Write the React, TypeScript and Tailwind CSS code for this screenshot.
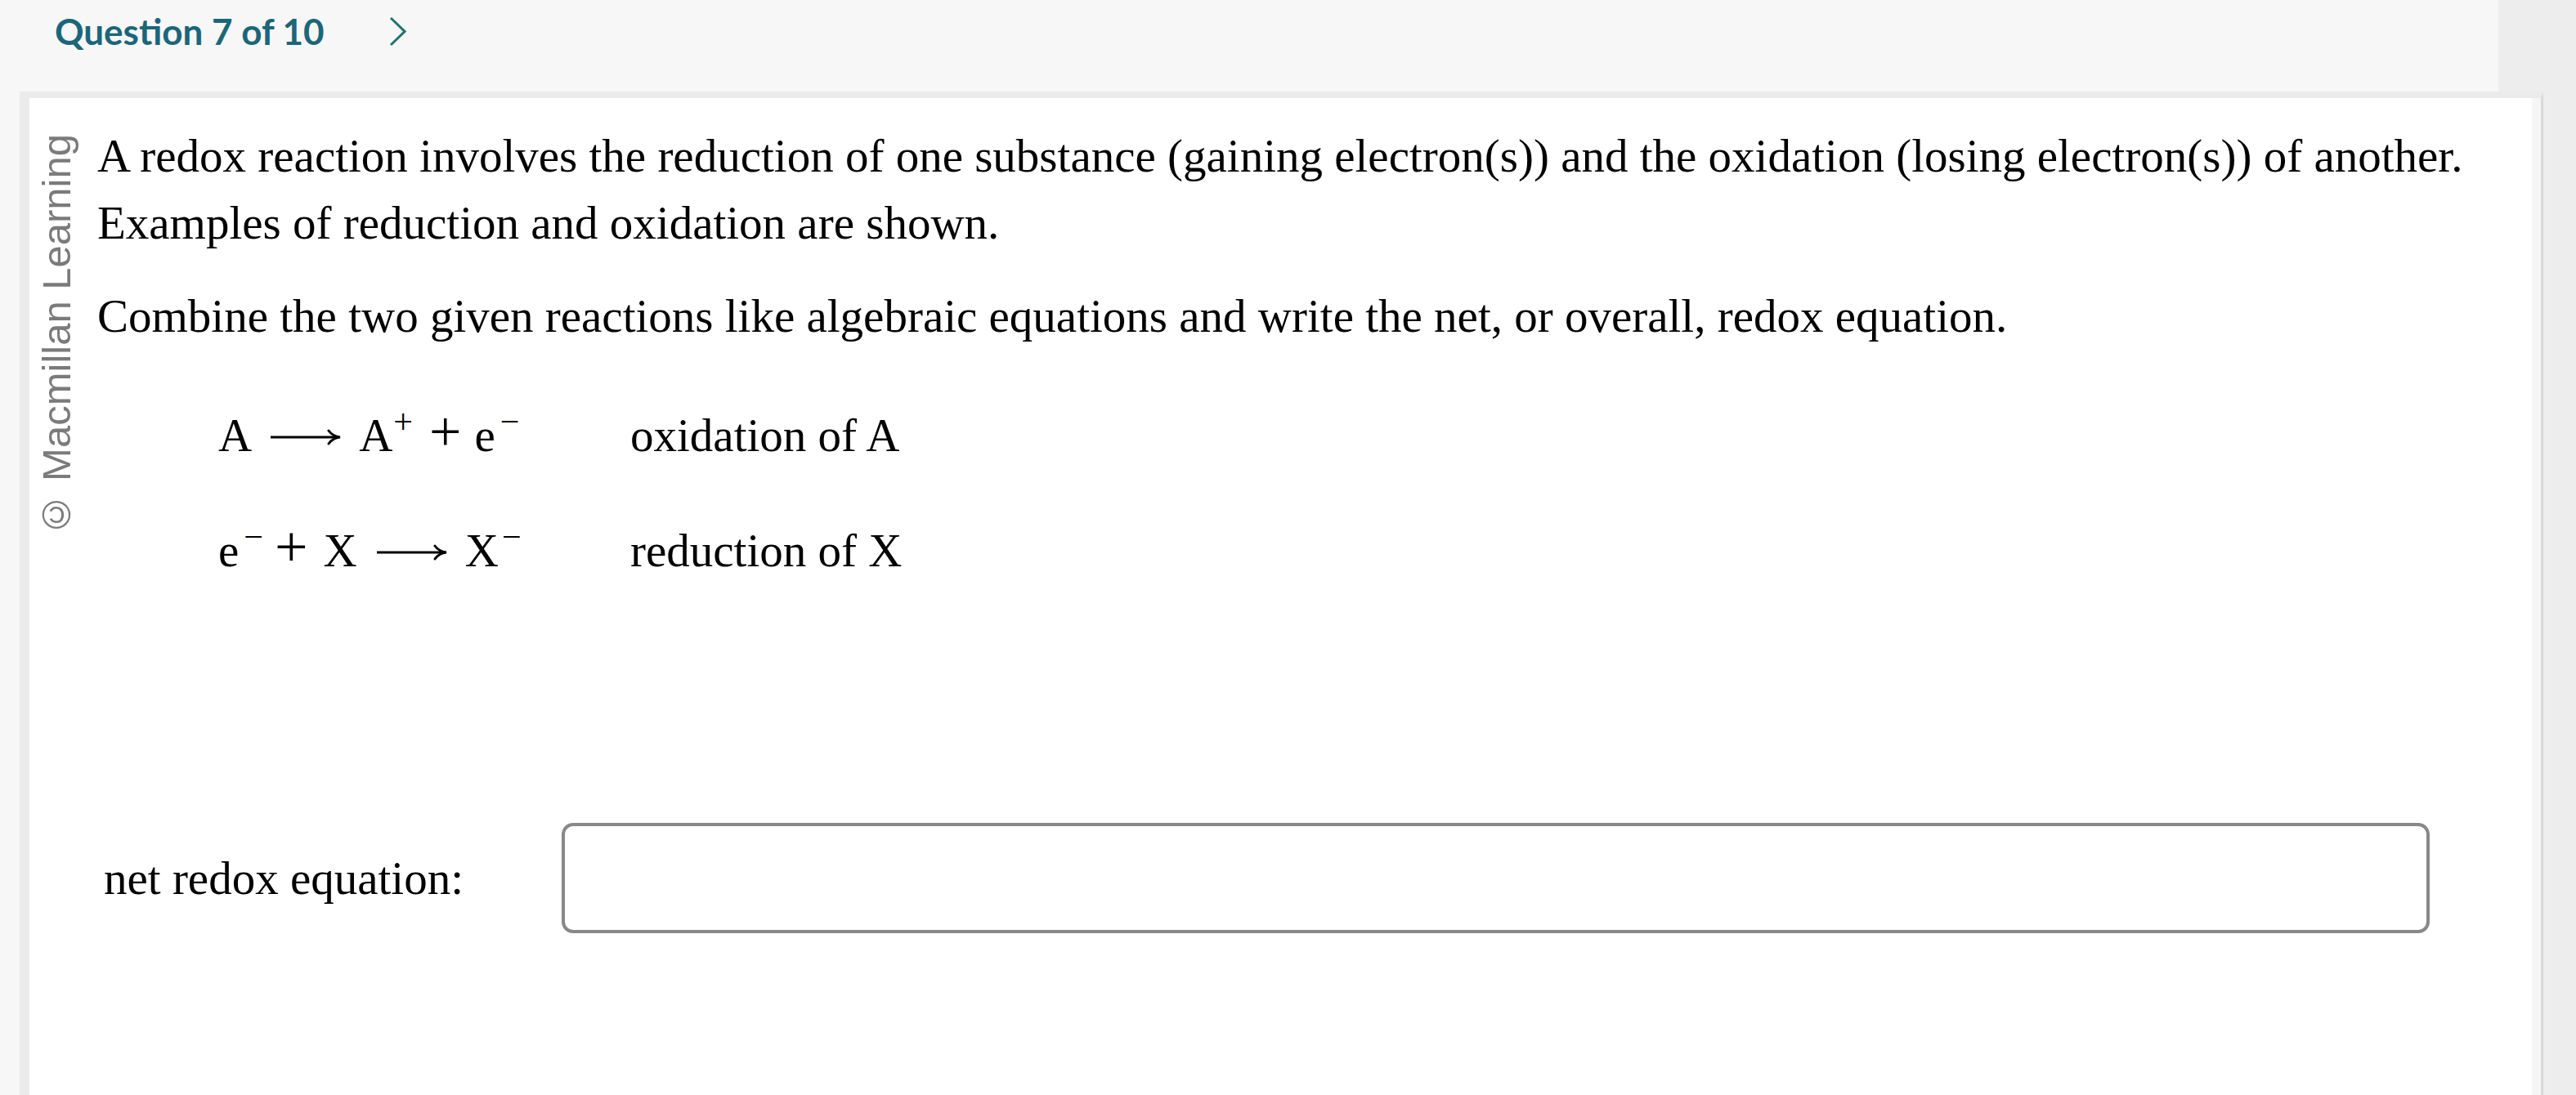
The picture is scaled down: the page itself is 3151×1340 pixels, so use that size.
function Arrow() {
  return (
    <svg className="inline-block h-[20px] w-[86px] align-[7px]" viewBox="0 0 86 20">
      <path d="M0 10 H82" stroke="#000" strokeWidth="3.2" fill="none" />
      <path d="M71 2 Q76 9 85 10 Q76 11 71 18" stroke="#000" strokeWidth="3" fill="none" strokeLinecap="round" />
    </svg>
  );
}

function Sup({ children, className = '' }: { children: string; className?: string }) {
  return <span className={`text-[42px] leading-none align-[22px] ${className}`}>{children}</span>;
}

export default function App() {
  return (
    <div className="flex h-[1340px] w-full overflow-hidden bg-[#ededed]">
      <div className="flex w-[3111px] shrink-0 flex-col">
        <header className="flex h-[112px] w-[3056px] shrink-0 items-start bg-[#f7f7f7] pl-[67px] pt-[16px]">
          <h1 className="font-['Lato',sans-serif] text-[44px] font-bold leading-[44px] text-[#1b6679]">
            Question 7 of 10
          </h1>
          <svg className="ml-[78px] mt-[4px] h-[37px] w-[22px]" viewBox="0 0 22 37">
            <path d="M3 2 L20 18.5 L3 35" fill="none" stroke="#1e7470" strokeWidth="3" />
          </svg>
        </header>

        <div className="flex flex-1 bg-[#f7f7f7] pl-[24px]">
          <div className="flex flex-1 border-l-[12px] border-r-[3px] border-t-[8px] border-[#ebebeb] border-r-[#d9d9d9]">
            <div className="flex flex-1 border-r-[11px] border-[#f6f6f6] bg-white">
              <div className="pl-[9px] pt-[44px]">
                <div className="rotate-180 font-['Liberation_Sans',Arial,sans-serif] text-[49px] leading-[49px] text-[#7b7b7b] [writing-mode:vertical-rl]">
                  © Macmillan Learning
                </div>
              </div>

              <div className="ml-[25px] pt-[30px] font-['Liberation_Serif','Times_New_Roman',serif] text-[57px] leading-[82px] text-black">
                <p className="whitespace-nowrap">
                  A redox reaction involves the reduction of one substance (gaining electron(s)) and the oxidation
                  (losing electron(s)) of another.
                  <br />
                  Examples of reduction and oxidation are shown.
                </p>
                <p className="mt-[32px] whitespace-nowrap">
                  Combine the two given reactions like algebraic equations and write the net, or overall, redox
                  equation.
                </p>

                <div className="ml-[148px] mt-[34px] leading-[141px]">
                  <div className="grid grid-cols-[504px_auto]">
                    <div className="whitespace-nowrap">
                      <span>A</span>
                      <span className="ml-[23px]">
                        <Arrow />
                      </span>
                      <span className="ml-[22px]">A</span>
                      <Sup className="ml-[1px]">+</Sup>
                      <span className="ml-[20px] text-[70px] leading-none">+</span>
                      <span className="ml-[16px]">e</span>
                      <Sup className="ml-[6px]">−</Sup>
                    </div>
                    <div className="whitespace-nowrap">oxidation of A</div>
                  </div>
                  <div className="grid grid-cols-[504px_auto]">
                    <div className="whitespace-nowrap">
                      <span>e</span>
                      <Sup className="ml-[6px]">−</Sup>
                      <span className="ml-[14px] text-[72px] leading-none">+</span>
                      <span className="ml-[19px]">X</span>
                      <span className="ml-[24px]">
                        <Arrow />
                      </span>
                      <span className="ml-[22px]">X</span>
                      <Sup className="ml-[4px]">−</Sup>
                    </div>
                    <div className="whitespace-nowrap">reduction of X</div>
                  </div>
                </div>

                <div className="mt-[263px] flex items-center pl-[8px]">
                  <label className="w-[560px] shrink-0 whitespace-nowrap">net redox equation:</label>
                  <input
                    type="text"
                    aria-label="net redox equation"
                    className="h-[135px] w-[2285px] shrink-0 rounded-[14px] border-[4px] border-[#888888] bg-white outline-none"
                  />
                </div>
              </div>
            </div>
          </div>
        </div>
      </div>
    </div>
  );
}
